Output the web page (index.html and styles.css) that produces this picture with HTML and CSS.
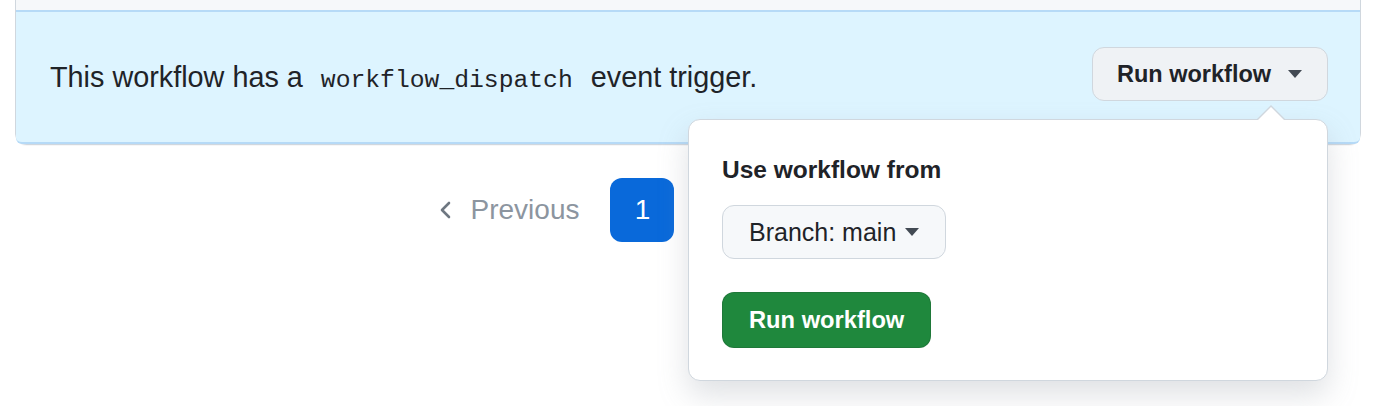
FILE: index.html
```html
<!DOCTYPE html>
<html lang="en">
<head>
<meta charset="UTF-8" />
<meta name="viewport" content="width=device-width, initial-scale=1" />
<title>Actions - Workflow runs</title>
<link rel="stylesheet" href="styles.css">
</head>
<body>

<div class="box">
  <div class="box-head"></div>
  <div class="flash">
    <p class="flash-text">This workflow has a <code>workflow_dispatch</code> event trigger.</p>
    <div class="actions">
      <button class="btn btn-run">Run workflow <span class="caret"></span></button>
      <div class="popover">
        <h4>Use workflow from</h4>
        <button class="btn btn-branch">Branch: main <span class="caret"></span></button>
        <button class="btn btn-primary">Run workflow</button>
      </div>
    </div>
  </div>
</div>

<nav class="pagination">
  <span class="page-prev">
    <svg width="12" height="18" viewBox="0 0 12 18"><path d="M10 2 L3 9 L10 16" fill="none" stroke="#6e7781" stroke-width="2.6" stroke-linecap="round" stroke-linejoin="round"/></svg>
    Previous
  </span>
  <span class="page-current">1</span>
  <span class="page-next">Next</span>
</nav>

</body>
</html>
```

FILE: styles.css
```css
html, body {
  min-height: 100%;
}
body {
  margin: 0;
  min-height: 406px;
  background: #fff;
  color: #1f2328;
  font-family: "Liberation Sans", Arial, sans-serif;
}
.box {
  margin: 0 15px;
  border: 1px solid #d0d7de;
  border-top: none;
  border-radius: 0 0 12px 12px;
  box-shadow: 0 1px 0 rgba(31, 35, 40, 0.04);
}
.box-head {
  height: 10px;
  background: #f6f8fa;
}
.flash {
  display: flex;
  align-items: center;
  justify-content: space-between;
  height: 130px;
  padding: 0 32px 0 34px;
  background: #ddf4ff;
  border-top: 2px solid #b6daf7;
  border-bottom: 2px solid #b6daf7;
  border-radius: 0 0 6px 6px;
}
.flash-text {
  margin: 0;
  font-size: 28.8px;
  white-space: nowrap;
}
.flash-text code {
  font-family: "Liberation Mono", monospace;
  font-size: 24.7px;
  padding: 0 10px;
}
.actions {
  position: relative;
  margin-top: -6px;
}
.btn {
  display: flex;
  align-items: center;
  box-sizing: border-box;
  height: 54px;
  font-family: inherit;
  color: #1f2328;
  white-space: nowrap;
  background: #f6f8fa;
  border: 1px solid #d0d7de;
  border-radius: 12px;
  cursor: pointer;
}
.btn-run {
  width: 236px;
  padding: 0 25px 0 24px;
  font-size: 23.5px;
  font-weight: 700;
  background: #eff2f5;
  gap: 17px;
}
.caret {
  display: inline-block;
  width: 0;
  height: 0;
  border-top: 8px solid #424a53;
  border-left: 7px solid transparent;
  border-right: 7px solid transparent;
}
.popover {
  position: absolute;
  top: calc(100% + 18px);
  right: 0;
  z-index: 10;
  width: 640px;
  box-sizing: border-box;
  padding: 32px 32px 32px 33px;
  background: #fff;
  border: 1px solid #d0d7de;
  border-radius: 12px;
  box-shadow: 0 14px 30px rgba(140, 149, 159, 0.28);
}
.popover::before,
.popover::after {
  content: "";
  position: absolute;
  border-style: solid;
  border-color: transparent;
}
.popover::before {
  top: -29px;
  right: 42px;
  border-width: 14px;
  border-bottom-color: #d0d7de;
}
.popover::after {
  top: -26px;
  right: 43px;
  border-width: 13px;
  border-bottom-color: #fff;
}
.popover h4 {
  margin: 0 0 17px;
  font-size: 24.5px;
  font-weight: 700;
  line-height: 36px;
}
.btn-branch {
  width: 224px;
  padding: 0 26px;
  font-size: 25px;
  gap: 9px;
}
.btn-primary {
  margin-top: 33px;
  height: 56px;
  padding: 0 26px;
  font-size: 23.7px;
  font-weight: 700;
  color: #fff;
  background: #1f883d;
  border-color: rgba(31, 35, 40, 0.15);
}
.pagination {
  display: flex;
  align-items: center;
  justify-content: center;
  margin-top: 33px;
  padding-right: 82px;
  font-size: 28px;
  color: #8c959f;
}
.page-prev,
.page-next {
  display: flex;
  align-items: center;
  gap: 20px;
}
.page-current {
  display: flex;
  align-items: center;
  justify-content: center;
  width: 64px;
  height: 64px;
  margin: 0 31px;
  color: #fff;
  background: #0969da;
  border-radius: 12px;
}
.page-next {
  width: 150px;
}
```
